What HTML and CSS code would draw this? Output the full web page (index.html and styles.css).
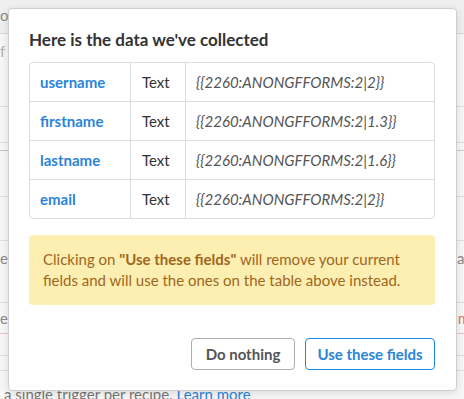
FILE: index.html
```html
<!DOCTYPE html>
<html lang="en">
<head>
    <meta charset="UTF-8" />
    <title>Collected data</title>
    <link rel="stylesheet" href="styles.css">
</head>
<body>
    <!-- page behind the dialog -->
    <div class="page">
        <div class="page-row r1">or</div>
        <div class="page-row r2">f</div>
        <div class="page-row r3"></div>
        <div class="page-row r4"></div>
        <div class="page-row r5"></div>
        <div class="page-row r6"></div>
        <div class="page-row r7"><span>e</span><span>ar</span></div>
        <div class="page-row r8"><span>el</span><span class="red">m</span></div>
        <div class="page-row r9"></div>
        <div class="page-row r10"></div>
        <div class="page-foot">a single trigger per recipe. <a href="#">Learn more</a></div>
    </div>

    <div class="modal" role="dialog" aria-labelledby="modal-title">
        <h2 class="modal-title" id="modal-title">Here is the data we've collected</h2>

        <table class="fields">
            <tbody>
                <tr><td class="name">username</td><td class="type">Text</td><td class="tag">{{2260:ANONGFFORMS:2|2}}</td></tr>
                <tr><td class="name">firstname</td><td class="type">Text</td><td class="tag">{{2260:ANONGFFORMS:2|1.3}}</td></tr>
                <tr><td class="name">lastname</td><td class="type">Text</td><td class="tag">{{2260:ANONGFFORMS:2|1.6}}</td></tr>
                <tr><td class="name">email</td><td class="type">Text</td><td class="tag">{{2260:ANONGFFORMS:2|2}}</td></tr>
            </tbody>
        </table>

        <div class="notice">
            Clicking on <strong>"Use these fields"</strong> will remove your current fields and will use the ones on the table above instead.
        </div>

        <div class="actions">
            <button class="btn btn-default" type="button">Do nothing</button>
            <button class="btn btn-primary" type="button">Use these fields</button>
        </div>
    </div>
</body>
</html>
```

FILE: styles.css
```css
:root {
    --azul: #2a84d8;
    --borde: #dddddd;
    --texto: #333333;
    --font: "Segoe UI", Lato, "Open Sans", sans-serif;
}

* {
    box-sizing: border-box;
}

body {
    margin: 0;
    font-family: var(--font);
    color: var(--texto);
    background: #f7f7f7;
    height: 399px;
    overflow: hidden;
}

/* fondo */
.page {
    color: #8a8a8a;
    font-size: 15px;
}

.page-row {
    display: flex;
    justify-content: space-between;
    align-items: center;
    border-bottom: 1px solid #e0e0e0;
    margin-right: -6px;
}

.page-row.r1 { height: 34px; background: #efefef; border-bottom-color: #d8d8d8; align-items: flex-start; padding-top: 6px; }
.page-row.r2 { height: 73px; align-items: flex-start; padding-top: 8px; color: #b0b0b0; }
.page-row.r3 { height: 36px; }
.page-row.r4 { height: 8px; border-bottom-color: #c8c8c8; }
.page-row.r5 { height: 46px; }
.page-row.r6 { height: 44px; }
.page-row.r7 { height: 62px; align-items: flex-start; padding-top: 8px; }
.page-row.r8 { height: 31px; border-bottom-color: #f0c0c0; }
.page-row.r8 .red { color: #e07070; }
.page-row.r9 { height: 22px; }
.page-row.r10 { height: 15px; }

.page-foot {
    padding: 14px 0 0 4px;
    font-size: 15px;
    color: #777777;
}

.page-foot a {
    color: var(--azul);
    text-decoration: none;
}

/* dialogo */
.modal {
    position: absolute;
    top: 8px;
    left: 8px;
    width: 449px;
    height: 383px;
    background: #ffffff;
    border: 1px solid #cfcfcf;
    border-radius: 4px;
    box-shadow: 0 2px 8px rgba(0, 0, 0, 0.12);
    padding: 19px 20px 20px;
    display: flex;
    flex-direction: column;
}

.modal-title {
    margin: 0 0 10px;
    font-size: 17px;
    font-weight: 700;
    line-height: 24px;
    color: #333333;
}

.fields {
    width: 406px;
    border-collapse: separate;
    border-spacing: 0;
    border: 1px solid var(--borde);
    border-radius: 4px;
    font-size: 15px;
}

.fields td {
    height: 39px;
    padding: 0 10px;
    border-bottom: 1px solid var(--borde);
    border-left: 1px solid var(--borde);
    vertical-align: middle;
    white-space: nowrap;
}

.fields tr:last-child td {
    border-bottom: 0;
    height: 38px;
}

.fields td:first-child {
    border-left: 0;
}

.fields .name {
    width: 100px;
    color: var(--azul);
    font-weight: 700;
}

.fields .type {
    width: 55px;
    padding-left: 11px;
}

.fields .tag {
    font-style: italic;
    color: #555555;
}

.notice {
    margin-top: 16px;
    width: 406px;
    background: #fdefb2;
    color: #a0661c;
    border-radius: 4px;
    padding: 14px;
    font-size: 15px;
    line-height: 21px;
}

.notice strong {
    font-weight: 700;
}

.actions {
    margin-top: auto;
    display: flex;
    justify-content: flex-end;
    gap: 10px;
    padding-right: 1px;
}

.btn {
    height: 32px;
    padding: 0;
    font-family: var(--font);
    font-size: 15px;
    font-weight: 700;
    white-space: nowrap;
    background: #ffffff;
    border-radius: 4px;
    cursor: pointer;
}

.btn-default {
    width: 104px;
    border: 1px solid #adadad;
    color: #555555;
}

.btn-primary {
    width: 130px;
    border: 1px solid #1a8ae2;
    color: var(--azul);
}
```
